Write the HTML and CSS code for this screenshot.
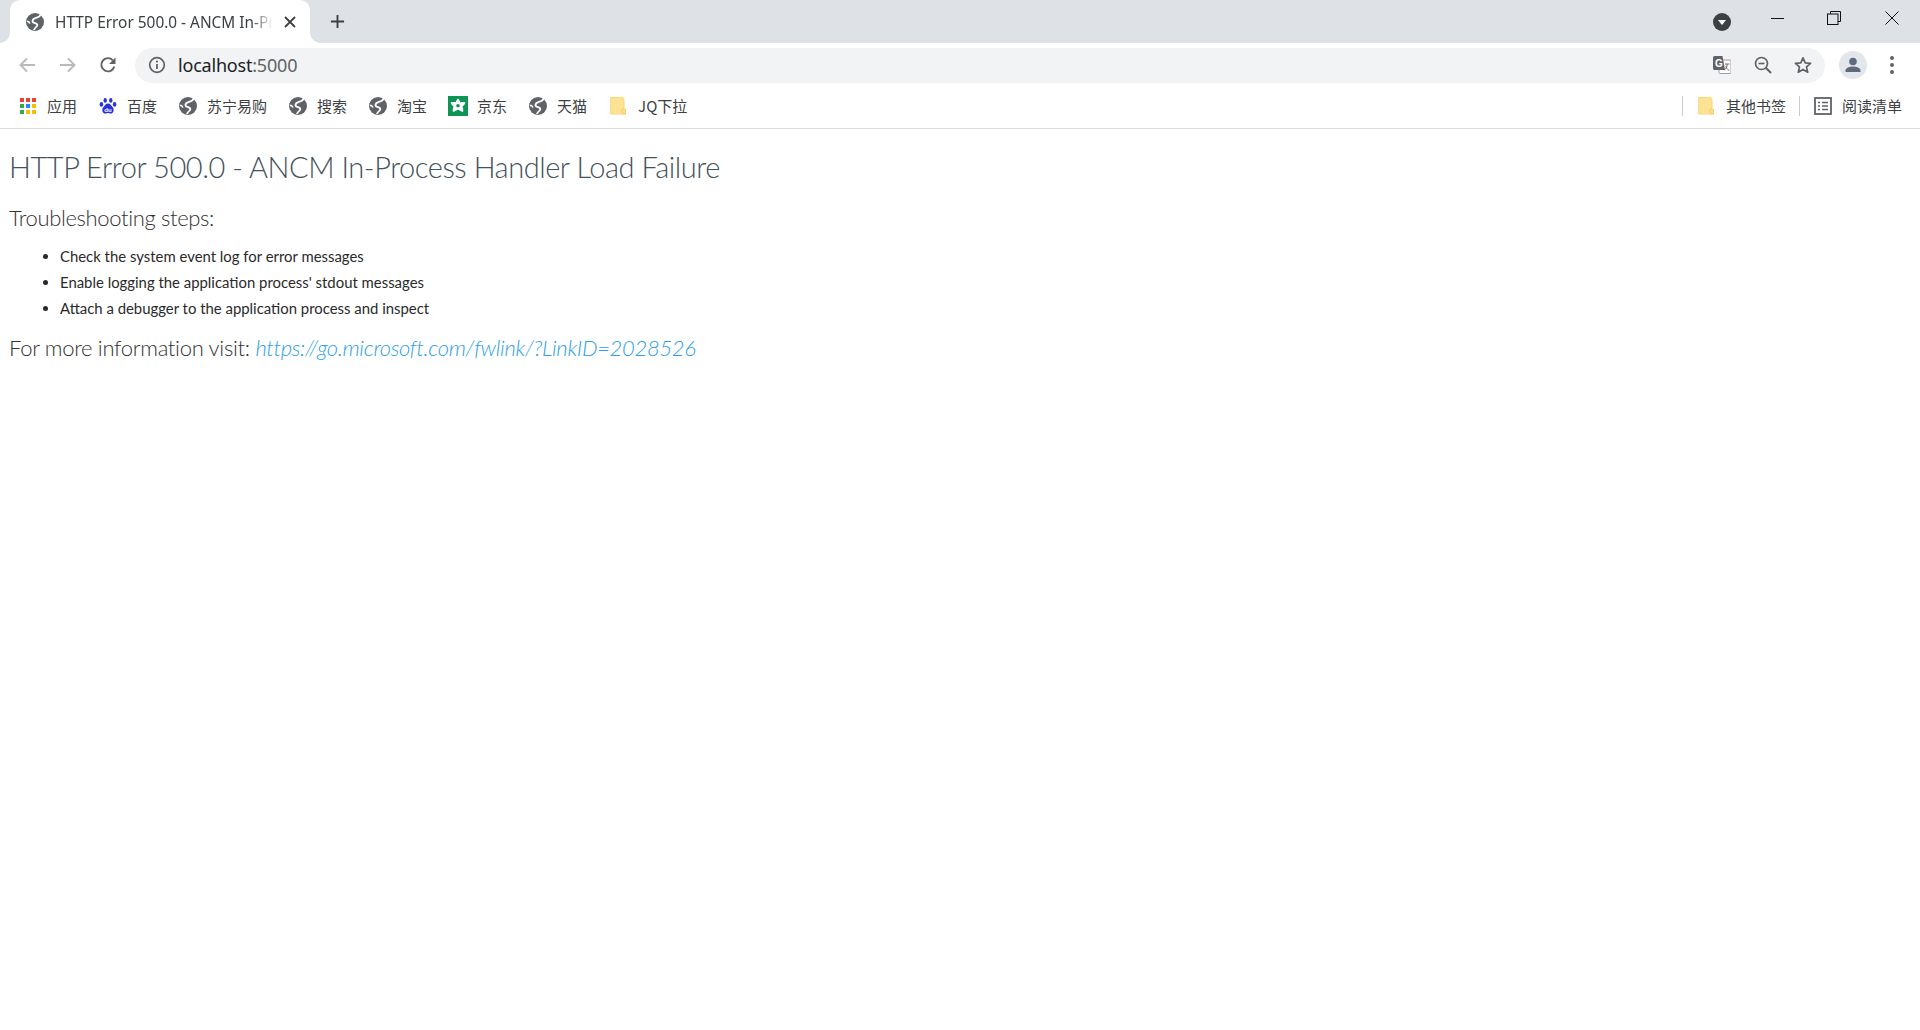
FILE: index.html
```html
<!DOCTYPE html>
<html lang="en">
<head>
<meta charset="utf-8">
<title>HTTP Error 500.0 - ANCM In-Process Handler Load Failure</title>
<link rel="stylesheet" href="styles.css">
</head>
<body>
<svg class="defs" width="0" height="0" aria-hidden="true">
  <symbol id="globe" viewBox="0 0 18 18">
    <circle cx="9" cy="9" r="9" fill="#5f6368"/>
    <path d="M14.500 1.800C13 6 6.500 4 6.500 8c0 3.200 5 1.300 4.800 4.300-.1 2-2.800 1.700-3.300 4.900" fill="none" stroke="#fff" stroke-width="1.800"/>
    <path d="M.8 8.200c1.700 0 2.700.8 3 2.400" fill="none" stroke="#fff" stroke-width="1.400"/>
  </symbol>
  <symbol id="folder" viewBox="0 0 16 18">
    <path d="M1.500.5h10.500c1.200 0 2 .8 2 2v10h1.500v4.500h-14.500c-.6 0-1-.4-1-1v-15c0-.3.200-.5.500-.5z" fill="#fde293" stroke="#f5d77e"/>
    <rect x="12" y="12" width="3.500" height="5" rx="1" fill="#fde293" stroke="#f2c94c" stroke-width=".8"/>
  </symbol>
</svg>

<header class="chrome">
  <div class="tabstrip">
    <div class="tab">
      <svg class="ico18"><use href="#globe"/></svg>
      <span class="tab-title">HTTP Error 500.0 - ANCM In-Process Handler Load Failure</span>
      <svg class="tab-close" viewBox="0 0 12 12"><path d="M1 1l10 10M11 1L1 11" stroke="#3c4043" stroke-width="1.800"/></svg>
    </div>
    <svg class="new-tab" viewBox="0 0 16 16"><path d="M8 1v14M1 8h14" stroke="#3c4043" stroke-width="2"/></svg>
    <div class="win-controls">
      <svg class="tab-search" viewBox="0 0 18 18"><circle cx="9" cy="9" r="9" fill="#3c4043"/><path d="M5 7h8l-4 5z" fill="#fff"/></svg>
      <svg class="win-btn win-first" viewBox="0 0 14 14"><path d="M0 7.500h13" stroke="#111" stroke-width="1"/></svg>
      <svg class="win-btn win-restore" viewBox="0 0 14 14"><path d="M3.500 3V.5h10v10H11" fill="none" stroke="#111"/><rect x=".5" y="3" width="10.500" height="10.500" fill="none" stroke="#111"/></svg>
      <svg class="win-btn win-close" viewBox="0 0 14 14"><path d="M.5.5l13 13M13.500.5l-13 13" stroke="#111" stroke-width="1"/></svg>
    </div>
  </div>

  <div class="toolbar">
    <button class="nav-btn" type="button"><svg class="ico18" viewBox="0 0 18 18"><path d="M17 9H2.500M9 2.500L2.500 9 9 15.500" fill="none" stroke="#b8babd" stroke-width="1.900"/></svg></button>
    <button class="nav-btn" type="button"><svg class="ico18" viewBox="0 0 18 18"><path d="M1 9h14.500M9 2.500L15.500 9 9 15.500" fill="none" stroke="#b8babd" stroke-width="1.900"/></svg></button>
    <button class="nav-btn" type="button"><svg class="ico18" viewBox="0 0 18 18"><path d="M15.300 10.500A6.600 6.600 0 1 1 13.800 4.300" fill="none" stroke="#5f6368" stroke-width="1.900"/><path d="M16.500 1.500v6.500H10z" fill="#5f6368"/></svg></button>
    <div class="omnibox">
      <svg class="ico18" viewBox="0 0 18 18"><circle cx="9" cy="9" r="7.300" fill="none" stroke="#5f6368" stroke-width="1.700"/><path d="M9 8v5" stroke="#5f6368" stroke-width="1.800"/><circle cx="9" cy="5.600" r="1.100" fill="#5f6368"/></svg>
      <span class="url">localhost<span class="url-port">:5000</span></span>
      <div class="omni-actions">
        <svg class="ico18" viewBox="0 0 18 18"><rect x="6" y="4" width="12" height="13.500" rx="1" fill="#fff" stroke="#9aa0a6"/><path d="M1.500 0h8l2.500 14H1.500A1.500 1.500 0 0 1 0 12.500v-11A1.500 1.500 0 0 1 1.500 0z" fill="#5f6368"/><text class="tr-g" x="2" y="10.500">G</text><path d="M12 8h4.500M14.200 8c0 3-1.300 5-2.700 6M12.800 10c.5 2 1.700 3.500 3.500 4.500" fill="none" stroke="#5f6368" stroke-width=".9"/></svg>
        <svg class="ico18" viewBox="0 0 18 18"><circle cx="7.500" cy="7.500" r="6" fill="none" stroke="#5f6368" stroke-width="1.700"/><path d="M4.500 7.500h6" stroke="#5f6368" stroke-width="1.600"/><path d="M11.800 11.800L17 17" stroke="#5f6368" stroke-width="2"/></svg>
        <svg class="ico18" viewBox="0 0 18 18"><path d="M9 1.800l2.200 5 5.400.5-4.100 3.600 1.200 5.300L9 13.400l-4.700 2.800 1.200-5.300-4.100-3.600 5.400-.5z" fill="none" stroke="#5f6368" stroke-width="1.700" stroke-linejoin="round"/></svg>
      </div>
    </div>
    <div class="avatar"><svg viewBox="0 0 18 18" class="ico18"><circle cx="9" cy="5.500" r="3.800" fill="#5f6b7c"/><path d="M1.500 16v-1.500c0-2.600 4.500-4 7.500-4s7.500 1.400 7.500 4V16z" fill="#5f6b7c"/></svg></div>
    <div class="kebab"><i></i><i></i><i></i></div>
  </div>

  <nav class="bookmarks">
    <a class="bm"><span class="apps"><i class="r"></i><i class="r"></i><i class="r"></i><i class="g"></i><i class="b"></i><i class="y"></i><i class="g"></i><i class="y"></i><i class="y"></i></span>应用</a>
    <a class="bm"><svg class="ico18" viewBox="0 0 18 18"><g fill="#2932e1"><ellipse cx="6.200" cy="3.400" rx="1.700" ry="2.400"/><ellipse cx="11.800" cy="3.400" rx="1.700" ry="2.400"/><ellipse cx="2.400" cy="7.400" rx="1.800" ry="2.300"/><ellipse cx="15.600" cy="7.400" rx="1.800" ry="2.300"/><path d="M9 6.500c2.500 0 3 2.200 4.500 3.400 2 1.600 1.500 6.600-2 6.600-1 0-1.600-.5-2.500-.5s-1.500.5-2.500.5c-3.500 0-4-5-2-6.600C6 8.700 6.500 6.500 9 6.500z"/></g><text class="du" x="9" y="15">du</text></svg>百度</a>
    <a class="bm"><svg class="ico18"><use href="#globe"/></svg>苏宁易购</a>
    <a class="bm"><svg class="ico18"><use href="#globe"/></svg>搜索</a>
    <a class="bm"><svg class="ico18"><use href="#globe"/></svg>淘宝</a>
    <a class="bm"><svg class="ico20" viewBox="0 0 20 20"><rect width="20" height="20" fill="#0e9455"/><path d="M10 2.500c1.500 1.200 2 3 2.300 3.700 1.500-.3 3.500-.6 5.200.2-.5 2-2 3.300-3 4 .6 1.500 1.200 3.500.5 5.500-2-.3-3.800-1.500-5-2.300-1.200.8-3 2-5 2.300-.7-2 0-4 .5-5.500-1-.7-2.500-2-3-4 1.700-.8 3.700-.5 5.200-.2.300-.7.800-2.500 2.300-3.700z" fill="#fff"/><circle cx="10" cy="9.800" r="1.800" fill="#0e9455"/></svg>京东</a>
    <a class="bm"><svg class="ico18"><use href="#globe"/></svg>天猫</a>
    <a class="bm"><svg class="ico16" viewBox="0 0 16 18"><use href="#folder"/></svg>JQ下拉</a>
    <div class="bm-right">
      <span class="bm-sep"></span>
      <a class="bm"><svg class="ico16" viewBox="0 0 16 18"><use href="#folder"/></svg>其他书签</a>
      <span class="bm-sep"></span>
      <a class="bm"><svg class="ico18" viewBox="0 0 18 18"><rect x="1" y="1" width="16" height="16" fill="none" stroke="#5f6368" stroke-width="1.800"/><path d="M4 5.500h2M8 5.500h6M4 9h2M8 9h6M4 12.500h2M8 12.500h6" stroke="#5f6368" stroke-width="1.500"/></svg>阅读清单</a>
    </div>
  </nav>
</header>

<main class="page">
  <h1>HTTP Error 500.0 - ANCM In-Process Handler Load Failure</h1>
  <h2>Troubleshooting steps:</h2>
  <ul>
    <li>Check the system event log for error messages</li>
    <li>Enable logging the application process' stdout messages</li>
    <li>Attach a debugger to the application process and inspect</li>
  </ul>
  <p class="more">For more information visit: <a href="#">https://go.microsoft.com/fwlink/?LinkID=2028526</a></p>
</main>
</body>
</html>
```
FILE: styles.css
```css
* { box-sizing: border-box; }
html, body { margin: 0; height: 100%; background: #fff; overflow: hidden; }
body { font-family: "Lato", "Noto Sans CJK SC", sans-serif; color: #222; }
.defs { display: block; height: 0; }
.ico18 { width: 18px; height: 18px; flex: none; display: block; }
.ico20 { width: 20px; height: 20px; flex: none; display: block; margin: 0 -1px; }
.ico16 { width: 16px; height: 18px; flex: none; display: block; margin: 0 2px 0 1px; }

/* tab strip */
.tabstrip { height: 43px; background: #dee1e6; display: flex; align-items: center; padding-left: 10px; }
.tab { position: relative; width: 300px; height: 43px; background: #fff; border-radius: 10px 10px 0 0; display: flex; align-items: center; padding: 0 14px 0 16px; }
.tab::before, .tab::after { content: ""; position: absolute; bottom: 0; width: 10px; height: 10px; background: radial-gradient(circle at var(--cx) 0, #dee1e6 9.500px, #fff 10px); }
.tab::before { left: -10px; --cx: 0; }
.tab::after { right: -10px; --cx: 10px; }
.tab-title { width: 218px; margin-left: 11px; padding-top: 1px; font: 15.400px "Noto Sans", sans-serif; color: #3c4043; white-space: nowrap; overflow: hidden; -webkit-mask-image: linear-gradient(to right, #000 90%, transparent 100%); mask-image: linear-gradient(to right, #000 90%, transparent 100%); }
.tab-close { width: 12px; height: 12px; margin-left: 11px; flex: none; }
.new-tab { width: 15px; height: 15px; margin-left: 20px; flex: none; }
.win-controls { margin-left: auto; display: flex; align-items: center; padding-right: 21px; height: 100%; }
.tab-search { width: 18px; height: 18px; }
.win-btn { width: 14px; height: 14px; margin-top: -7px; }
.win-first { margin-left: 40px; }
.win-restore { margin-left: 42px; }
.win-close { margin-left: 44px; }

/* toolbar */
.toolbar { height: 43px; display: flex; align-items: center; padding: 1px 26px 0 7px; background: #fff; }
.nav-btn { width: 40.500px; height: 36px; padding: 0; border: 0; background: none; display: flex; align-items: center; justify-content: center; }
.omnibox { flex: 1; height: 35px; margin-left: 6.500px; background: #f1f3f4; border-radius: 18px; display: flex; align-items: center; padding: 0 13px; }
.url { margin-left: 12px; font: 18px/24px "Noto Sans", sans-serif; color: #202124; letter-spacing: -.2px; }
.url-port { color: #5f6368; }
.omni-actions { margin-left: auto; display: flex; gap: 22.500px; }
.avatar { width: 28px; height: 28px; margin-left: 14px; border-radius: 50%; background: #e3e6ea; display: flex; align-items: center; justify-content: center; }
.kebab { width: 4px; margin-left: 23px; display: flex; flex-direction: column; gap: 3px; }
.kebab i { display: block; width: 4px; height: 4px; border-radius: 50%; background: #5f6368; }

/* bookmarks */
.bookmarks { height: 43px; padding: 0 0 2px 8px; border-bottom: 1px solid #dadce0; display: flex; align-items: center; background: #fff; }
.bm { display: flex; align-items: center; gap: 10px; padding: 0 11px; font: 15px/20px "Noto Sans CJK SC", sans-serif; color: #3c4043; white-space: nowrap; }
.apps { width: 18px; height: 18px; padding: 1px; flex: none; display: grid; grid-template-columns: repeat(3, 4px); grid-auto-rows: 4px; gap: 2px; }
.apps i { display: block; }
.apps .r { background: #ea4335; }
.apps .g { background: #34a853; }
.apps .b { background: #1a8cff; }
.apps .y { background: #fbbc05; }
.du { font: bold 6px "Liberation Sans", sans-serif; fill: #fff; text-anchor: middle; }
.tr-g { font: bold 10px "Liberation Sans", sans-serif; fill: #fff; }
.bm-right { margin-left: auto; display: flex; align-items: center; padding-right: 7px; }
.bm-sep { width: 1px; height: 20px; margin: 0 3px 0 2px; background: #c8cacc; }

/* page */
.page { padding: 0 9px; }
h1 { margin: 18px 0 0; font: 300 29px/40px "Lato", sans-serif; letter-spacing: -.45px; color: #44525c; }
h2 { margin: 16px 0 0; font: 300 22px/30px "Lato", sans-serif; letter-spacing: -.35px; color: #333; }
ul { margin: 10px 0 0; padding-left: 51px; font: 400 14.900px/26px "Lato", sans-serif; color: #2a2a2a; }
.more { margin: 12px 0 0; font: 300 22px/30px "Lato", sans-serif; letter-spacing: -.31px; color: #333; }
.more a { font-style: italic; color: #2e9fe8; text-decoration: none; }
```
